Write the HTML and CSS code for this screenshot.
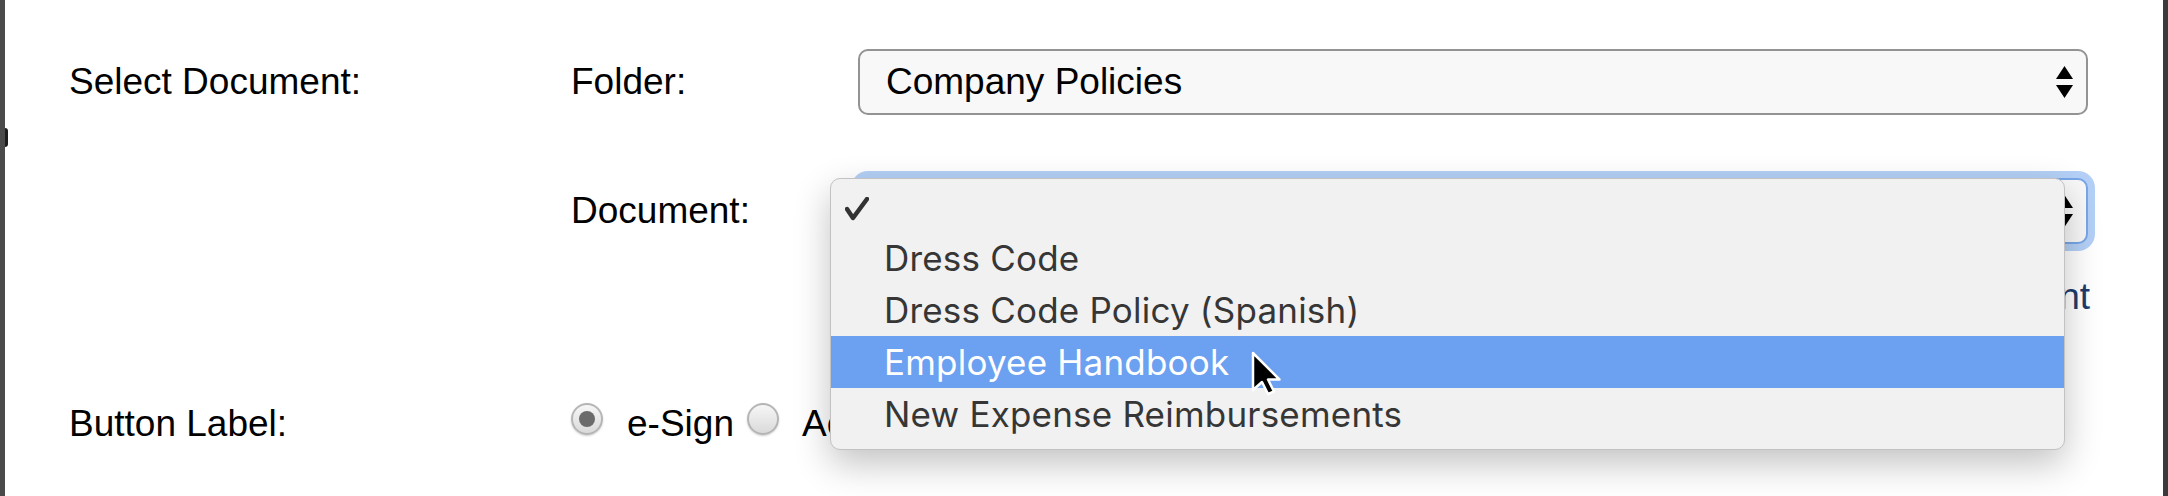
FILE: index.html
```html
<!DOCTYPE html>
<html lang="en">
<head>
  <meta charset="UTF-8" />
  <title>Select Document</title>
  <link rel="stylesheet" href="styles.css">
</head>
<body>
  <div class="dialog">

    <div class="form-row first">
      <div class="label">Select Document:</div>
      <div class="sub-label">Folder:</div>
      <div class="select">
        <span class="select-value">Company Policies</span>
        <svg class="arrows" width="17" height="32" viewBox="0 0 17 32">
          <polygon points="0,13 8.5,0 17,13" />
          <polygon points="0,19 8.5,32 17,19" />
        </svg>
      </div>
    </div>

    <div class="form-row second">
      <div class="label"></div>
      <div class="sub-label">Document:</div>
      <div class="select-wrap">
        <div class="select focused">
          <span class="select-value"></span>
          <svg class="arrows" width="17" height="32" viewBox="0 0 17 32">
            <polygon points="0,13 8.5,0 17,13" />
            <polygon points="0,19 8.5,32 17,19" />
          </svg>
        </div>

        <!-- open native-style popup -->
        <div class="menu">
          <div class="menu-item checked">
            <svg class="check" width="24" height="24" viewBox="0 0 24 24">
              <polyline points="2,12 8,21 22,2" />
            </svg>
          </div>
          <div class="menu-item">Dress Code</div>
          <div class="menu-item">Dress Code Policy (Spanish)</div>
          <div class="menu-item active">Employee Handbook</div>
          <div class="menu-item">New Expense Reimbursements</div>

          <svg class="cursor" width="33" height="48" viewBox="-3 -3 33 48">
            <path d="M0 0 L0 37 L9 29 L15 41 L21 38.5 L15 26.5 L26.5 26.5 Z" />
          </svg>
        </div>
      </div>
    </div>

    <div class="form-row third">
      <div></div>
      <div></div>
      <a href="#" class="link">Upload New Document</a>
    </div>

    <div class="form-row fourth">
      <div class="label">Button Label:</div>
      <div class="radios">
        <span class="radio on"></span>
        <span class="radio-text">e-Sign</span>
        <span class="radio"></span>
        <span class="radio-text">Acknowledge</span>
      </div>
    </div>

  </div>
</body>
</html>
```

FILE: styles.css
```css
body {
  margin: 0;
  padding: 0;
  background-color: #fff;
  font-family: 'Liberation Sans', Arial, sans-serif;
  color: #000;
}
.dialog {
  position: relative;
  height: 496px;
  box-sizing: border-box;
  border-left: 5px solid #4a4a4a;
  border-right: 5px solid #3a3a3a;
  padding: 49px 0 0 64px;
  overflow: hidden;
}
.dialog::before {
  content: "";
  position: absolute;
  left: 0;
  top: 128px;
  width: 3px;
  height: 19px;
  border-radius: 0 10px 10px 0;
  background-color: #1d1d1d;
}
.form-row {
  display: grid;
  grid-template-columns: 502px 287px 1230px;
  align-items: center;
}
.form-row.second {
  margin-top: 63px;
}
.form-row.third {
  margin-top: 32px;
}
.form-row.fourth {
  margin-top: 85px;
  grid-template-columns: 502px 1517px;
}
.label,
.sub-label,
.radio-text,
.link {
  font-size: 37px;
  line-height: 42px;
  white-space: nowrap;
}
.select {
  display: flex;
  align-items: center;
  justify-content: space-between;
  height: 66px;
  box-sizing: border-box;
  padding: 0 13px 0 26px;
  border: 2px solid #939393;
  border-radius: 10px;
  background-color: #f8f8f8;
  font-size: 37px;
}
.select.focused {
  border-color: #78a6e8;
  box-shadow: 0 0 0 7px rgba(130, 176, 240, 0.6);
}
.arrows polygon {
  fill: #000;
}
.select-wrap {
  position: relative;
}
.link {
  justify-self: end;
  margin-right: -2px;
  color: #1c3b6d;
  text-decoration: none;
}
.menu {
  position: absolute;
  left: -28px;
  top: 0;
  width: 1235px;
  height: 272px;
  box-sizing: border-box;
  padding: 1px 0 10px;
  border: 1px solid #c2c2c2;
  border-radius: 10px;
  background-color: #f1f1f1;
  box-shadow: 0 14px 36px rgba(0, 0, 0, 0.24);
  z-index: 2;
}
.menu-item {
  position: relative;
  height: 52px;
  line-height: 52px;
  padding-left: 53px;
  font-family: Inter, 'Noto Sans', sans-serif;
  font-size: 35px;
  letter-spacing: 0.2px;
  color: #363636;
  white-space: nowrap;
}
.menu-item.active {
  background-color: #6ca0f0;
  color: #fff;
}
.check {
  position: absolute;
  left: 14px;
  top: 17px;
}
.check polyline {
  fill: none;
  stroke: #333;
  stroke-width: 4.5;
  stroke-linecap: round;
  stroke-linejoin: round;
}
.cursor {
  position: absolute;
  left: 419px;
  top: 171px;
}
.cursor path {
  fill: #000;
  stroke: #fff;
  stroke-width: 2.5;
  stroke-linejoin: round;
}
.radios {
  display: flex;
  align-items: center;
}
.radio {
  position: relative;
  width: 32px;
  height: 32px;
  box-sizing: border-box;
  margin-bottom: 10px;
  border: 2px solid #b5b5b5;
  border-radius: 50%;
  background: linear-gradient(#f6f6f6, #dadada);
  box-shadow: 0 1px 2px rgba(0, 0, 0, 0.18);
}
.radio.on::after {
  content: "";
  position: absolute;
  left: 6px;
  top: 6px;
  width: 16px;
  height: 16px;
  border-radius: 50%;
  background-color: #6b6b6b;
}
.radio-text {
  margin: 0 13px 0 24px;
}
.radio-text:last-child {
  margin-left: 23px;
}
```
